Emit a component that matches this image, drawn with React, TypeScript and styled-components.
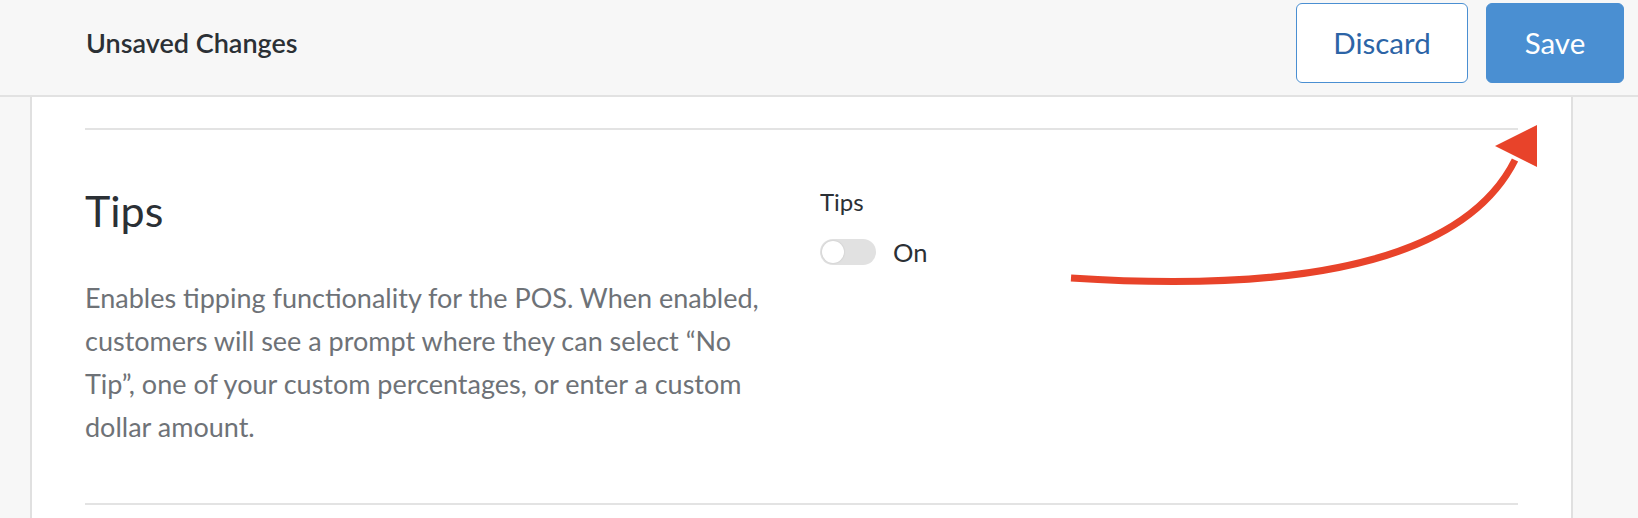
import React, { useState } from 'react';
import styled, { createGlobalStyle } from 'styled-components';

const GlobalStyle = createGlobalStyle`
  html, body {
    margin: 0;
    padding: 0;
    background: #f7f7f7;
    font-family: Lato, "Open Sans", sans-serif;
    color: #2b3035;
  }
`

const Page = styled.div`
  position: relative;
  width: 1638px;
  height: 518px;
  overflow: hidden;
  background: #f7f7f7;
`

const Header = styled.header`
  display: flex;
  align-items: center;
  justify-content: space-between;
  height: 97px;
  padding: 0 14px 10px 86px;
  box-sizing: border-box;
  border-bottom: 2px solid #e2e2e2;
  background: #f7f7f7;
`

const HeaderTitle = styled.div`
  font-size: 27px;
  font-weight: 600;
  color: #2b3035;
`

const Actions = styled.div`
  display: flex;
  gap: 18px;
`

const ActionButton = styled.button<{ primary?: boolean }>`
  height: 80px;
  width: ${p => (p.primary ? '138px' : '172px')};
  border-radius: 6px;
  border: 1.5px solid #4a8fd2;
  background: ${p => (p.primary ? '#4a8fd2' : '#ffffff')};
  color: ${p => (p.primary ? '#ffffff' : '#2c64a6')};
  font-family: Lato, sans-serif;
  font-size: 29.5px;
  font-weight: 400;
  cursor: pointer;
`

const Main = styled.main`
  display: flex;
  padding: 0 65px 0 30px;
  height: 421px;
`

const Panel = styled.section`
  flex: 1;
  background: #ffffff;
  border-left: 2px solid #e0e0e0;
  border-right: 2px solid #e0e0e0;
  padding: 31px 53px 0;
`

const Divider = styled.div`
  height: 2px;
  background: #e3e3e3;
`

const Setting = styled.div`
  display: grid;
  grid-template-columns: 690px 1fr;
  column-gap: 45px;
  padding: 56px 0 55px;
`

const SettingTitle = styled.h2`
  margin: 0 0 40px;
  font-size: 43px;
  font-weight: 400;
  line-height: 50px;
  color: #2b3035;
`

const Description = styled.p`
  margin: 0;
  font-size: 27px;
  line-height: 43px;
  color: #6e7277;
`

const Control = styled.div`
  display: flex;
  flex-direction: column;
  gap: 19px;
`

const FieldLabel = styled.label`
  font-size: 24px;
  line-height: 32px;
  color: #2b3035;
`

const ToggleRow = styled.div`
  display: flex;
  align-items: center;
  gap: 17px;
  height: 30px;
`

const Track = styled.button<{ on: boolean }>`
  position: relative;
  width: 56px;
  height: 26px;
  border: none;
  border-radius: 13px;
  padding: 0;
  background: ${p => (p.on ? '#4a8fd2' : '#e1e1e1')};
  cursor: pointer;
`

const Knob = styled.span<{ on: boolean }>`
  position: absolute;
  top: 2px;
  left: ${p => (p.on ? '32px' : '2px')};
  width: 22px;
  height: 22px;
  border-radius: 50%;
  background: #ffffff;
  box-shadow: 0 0 2px rgba(0, 0, 0, 0.15);
`

const ToggleText = styled.span`
  font-size: 25.5px;
  color: #2b3035;
`

const Annotation = styled.svg`
  position: absolute;
  left: 0;
  top: 0;
  pointer-events: none;
`

export default function App() {
  const [tipsOn, setTipsOn] = useState(false)

  return (
    <Page>
      <GlobalStyle />
      <Header>
        <HeaderTitle>Unsaved Changes</HeaderTitle>
        <Actions>
          <ActionButton>Discard</ActionButton>
          <ActionButton primary>Save</ActionButton>
        </Actions>
      </Header>
      <Main>
        <Panel>
          <Divider />
          <Setting>
            <div>
              <SettingTitle>Tips</SettingTitle>
              <Description>
                Enables tipping functionality for the POS. When enabled, customers will see a prompt where they can select “No Tip”, one of your custom percentages, or enter a custom dollar amount.
              </Description>
            </div>
            <Control>
              <FieldLabel>Tips</FieldLabel>
              <ToggleRow>
                <Track on={tipsOn} onClick={() => setTipsOn(!tipsOn)}>
                  <Knob on={tipsOn} />
                </Track>
                <ToggleText>On</ToggleText>
              </ToggleRow>
            </Control>
          </Setting>
          <Divider />
        </Panel>
      </Main>
      <Annotation width="1638" height="518" viewBox="0 0 1638 518">
        <path d="M1071,278 C1330,295 1470,250 1515,160" fill="none" stroke="#e8432a" strokeWidth="7" />
        <polygon points="1537,125 1537,167 1495,146" fill="#e8432a" />
      </Annotation>
    </Page>
  )
}
